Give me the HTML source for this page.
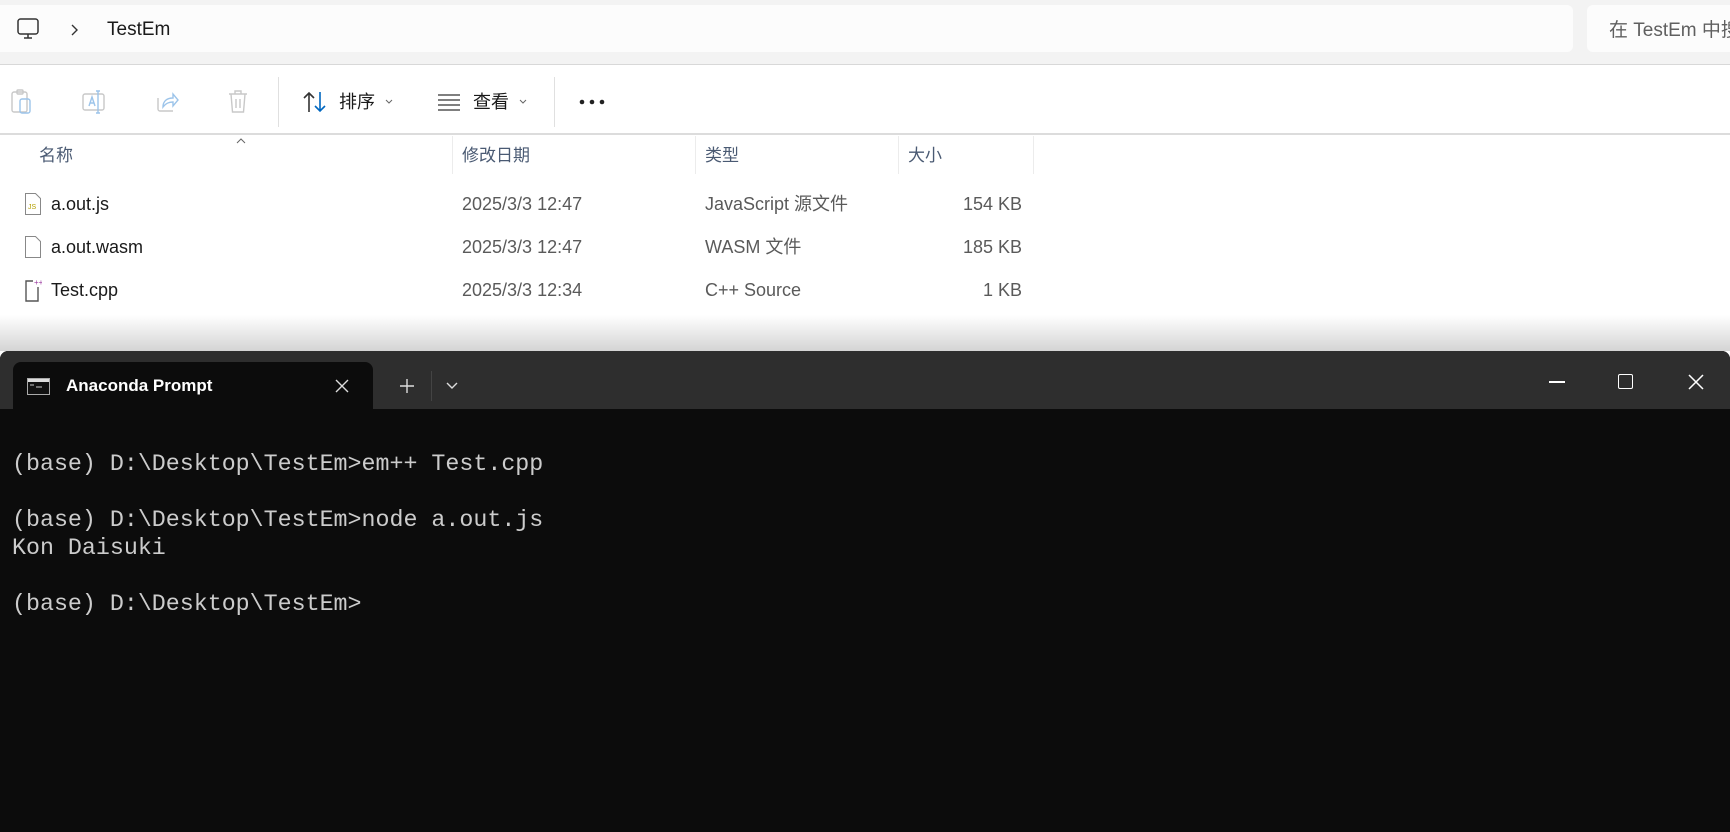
<!DOCTYPE html>
<html><head><meta charset="utf-8"><style>
*{margin:0;padding:0;box-sizing:border-box}
body{width:1730px;height:832px;overflow:hidden;background:#fff;font-family:"Segoe UI","Liberation Sans","Noto Sans CJK SC",sans-serif;position:relative}
.a{position:absolute}
.top{left:0;top:0;width:1730px;height:65px;background:#f3f3f3;border-bottom:1px solid #d8d8d8}
.addr{left:0;top:5px;width:1573px;height:47px;background:#fcfcfc;border-radius:0 6px 6px 0}
.search{left:1587px;top:5px;width:160px;height:47px;background:#fcfcfc;border-radius:6px}
.tb{left:0;top:66px;width:1730px;height:69px;background:#fff;border-bottom:2px solid #dcdcdc}
.t{font-size:18px;color:#1a1a1a;white-space:nowrap;line-height:22px}
.hd{font-size:17px;color:#4a5a73;top:146px;line-height:22px}
.sep{width:1px;background:#ececec;top:136px;height:38px}
.g{color:#5a5a5a}
.term{left:0;top:351px;width:1730px;height:481px;background:#0c0c0c;border-radius:8px 8px 0 0;overflow:hidden}
.tbar{left:0;top:0;width:1730px;height:58px;background:#2e2e2e}
.tab{left:13px;top:11px;width:360px;height:47px;background:#0c0c0c;border-radius:8px 8px 0 0}
pre{font-family:"Liberation Mono",monospace;font-size:23.3px;line-height:28px;color:#cccccc;position:absolute;left:12px;top:99px}
.shadow{left:0;top:315px;width:1730px;height:36px;background:linear-gradient(#fff,#d4d4d4)}
</style></head><body>
<div class="a top"></div>
<div class="a addr"></div>
<div class="a search"></div>
<svg class="a" style="left:16px;top:17px" width="24" height="24" viewBox="0 0 24 24" fill="none" stroke="#333" stroke-width="1.5"><rect x="2" y="2" width="20" height="15" rx="2.5"/><path d="M8 21h8M12 17v4"/></svg>
<svg class="a" style="left:69px;top:23px" width="10" height="14" viewBox="0 0 10 14" fill="none" stroke="#333" stroke-width="1.4"><path d="M3 2l5 5-5 5"/></svg>
<div class="a t" style="left:107px;top:19px;font-size:19px">TestEm</div>
<div class="a t" style="left:1609px;top:20px;font-size:19px;color:#5f5f5f">在 TestEm 中搜</div>
<div class="a tb"></div>
<svg class="a" style="left:10px;top:89px" width="24" height="26" viewBox="0 0 24 26" fill="none" stroke="#c8c8c8" stroke-width="1.4"><rect x="2" y="3" width="15" height="20" rx="2"/><rect x="7" y="1" width="6" height="4" rx="1"/><rect x="10" y="10" width="10" height="14" rx="2" stroke="#9cc4ea"/></svg>
<svg class="a" style="left:81px;top:89px" width="26" height="26" viewBox="0 0 26 26" fill="none" stroke="#c8c8c8" stroke-width="1.4"><rect x="2" y="5" width="21" height="16" rx="2"/><path d="M8 17l3-9 3 9M9 14h4" stroke="#9cc4ea"/><path d="M17 2v22M15 2h4M15 24h4" stroke="#9cc4ea"/></svg>
<svg class="a" style="left:154px;top:90px" width="26" height="24" viewBox="0 0 26 24" fill="none" stroke="#c8c8c8" stroke-width="1.4"><path d="M4 8v11a2 2 0 0 0 2 2h13"/><path d="M9 17c0-6 4-9 10-9V4l5 6-5 6v-4c-4 0-7 1-10 5z" stroke="#9cc4ea"/></svg>
<svg class="a" style="left:226px;top:89px" width="24" height="26" viewBox="0 0 24 26" fill="none" stroke="#c8c8c8" stroke-width="1.4"><path d="M3 5h18M9 5V2h6v3M5 5l1.5 18h11L19 5M10 10v9M14 10v9"/></svg>
<div class="a" style="left:278px;top:77px;width:1px;height:50px;background:#e0e0e0"></div>
<svg class="a" style="left:302px;top:90px" width="26" height="24" viewBox="0 0 26 24" fill="none" stroke-width="1.6"><path d="M7 22V3M2 8l5-5 5 5" stroke="#333"/><path d="M18 2v19M13 16l5 5 5-5" stroke="#0067c0"/></svg>
<div class="a t" style="left:339px;top:91px">排序</div>
<svg class="a" style="left:384px;top:98px" width="10" height="8" viewBox="0 0 10 8" fill="none" stroke="#666"><path d="M2 2l3 3 3-3"/></svg>
<svg class="a" style="left:437px;top:93px" width="24" height="18" viewBox="0 0 24 18" stroke="#333"><path d="M1 2h22M1 7h22M1 12h22M1 17h22" stroke-width="1.3"/></svg>
<div class="a t" style="left:473px;top:91px">查看</div>
<svg class="a" style="left:518px;top:98px" width="10" height="8" viewBox="0 0 10 8" fill="none" stroke="#666"><path d="M2 2l3 3 3-3"/></svg>
<div class="a" style="left:554px;top:77px;width:1px;height:50px;background:#e0e0e0"></div>
<svg class="a" style="left:578px;top:98px" width="28" height="8"><circle cx="4" cy="4" r="2.3" fill="#222"/><circle cx="14" cy="4" r="2.3" fill="#222"/><circle cx="24" cy="4" r="2.3" fill="#222"/></svg>
<svg class="a" style="left:235px;top:137px" width="12" height="8" viewBox="0 0 12 8" fill="none" stroke="#666"><path d="M2 6l4-4 4 4"/></svg>
<div class="a hd" style="left:39px;top:145px">名称</div>
<div class="a sep" style="left:452px"></div>
<div class="a hd" style="left:462px;top:145px">修改日期</div>
<div class="a sep" style="left:695px"></div>
<div class="a hd" style="left:705px;top:145px">类型</div>
<div class="a sep" style="left:898px"></div>
<div class="a hd" style="left:908px;top:145px">大小</div>
<div class="a sep" style="left:1033px"></div>
<svg class="a" style="left:24px;top:192px" width="18" height="24" viewBox="0 0 18 24" fill="#fff" stroke="#888"><path d="M1.5 1.5h10l5 5v16h-15z"/><text x="4" y="17" font-size="7" fill="#b5a000" stroke="none" font-family="Liberation Sans">JS</text></svg>
<div class="a t" style="left:51px;top:193px">a.out.js</div>
<div class="a t g" style="left:462px;top:193px">2025/3/3 12:47</div>
<div class="a t g" style="left:705px;top:193px">JavaScript 源文件</div>
<div class="a t g" style="left:900px;top:193px;width:122px;text-align:right">154 KB</div>
<svg class="a" style="left:24px;top:235px" width="18" height="24" viewBox="0 0 18 24" fill="#fff" stroke="#888"><path d="M1.5 1.5h10l5 5v16h-15z"/></svg>
<div class="a t" style="left:51px;top:236px">a.out.wasm</div>
<div class="a t g" style="left:462px;top:236px">2025/3/3 12:47</div>
<div class="a t g" style="left:705px;top:236px">WASM 文件</div>
<div class="a t g" style="left:900px;top:236px;width:122px;text-align:right">185 KB</div>
<svg class="a" style="left:24px;top:277px" width="18" height="26" viewBox="0 0 18 26" fill="none" stroke="#555" stroke-width="1.4"><path d="M9 4H2v20h12V10"/><text x="10" y="8" font-size="8" fill="#9b3ba0" stroke="none" font-family="Liberation Sans">++</text></svg>
<div class="a t" style="left:51px;top:279px">Test.cpp</div>
<div class="a t g" style="left:462px;top:279px">2025/3/3 12:34</div>
<div class="a t g" style="left:705px;top:279px">C++ Source</div>
<div class="a t g" style="left:900px;top:279px;width:122px;text-align:right">1 KB</div>
<div class="a shadow"></div>
<div class="a term">
<div class="a tbar"></div>
<div class="a tab"></div>
<svg class="a" style="left:27px;top:27px" width="23" height="17" viewBox="0 0 23 17"><rect x="0.5" y="0.5" width="22" height="16" fill="#111" stroke="#aaa"/><rect x="1" y="1" width="21" height="3" fill="#ddd"/><path d="M3 7h4M9 9h6" stroke="#ccc" stroke-width="1"/></svg>
<div class="a" style="left:66px;top:25px;font-size:17px;font-weight:bold;color:#fff;white-space:nowrap">Anaconda Prompt</div>
<svg class="a" style="left:334px;top:27px" width="16" height="16" stroke="#ddd" stroke-width="1.4"><path d="M2 2l12 12M14 2L2 14"/></svg>
<svg class="a" style="left:399px;top:27px" width="16" height="16" stroke="#ddd" stroke-width="1.4"><path d="M8 1v14M1 8h14"/></svg>
<div class="a" style="left:431px;top:20px;width:1px;height:30px;background:#444"></div>
<svg class="a" style="left:446px;top:31px" width="12" height="8" fill="none" stroke="#ddd" stroke-width="1.4"><path d="M1 1l5 5 5-5"/></svg>
<div class="a" style="left:1549px;top:30px;width:16px;height:1.5px;background:#fff"></div>
<div class="a" style="left:1618px;top:23px;width:15px;height:15px;border:1.5px solid #fff;border-radius:2px"></div>
<svg class="a" style="left:1688px;top:23px" width="16" height="16" stroke="#fff" stroke-width="1.5"><path d="M1 1l14 14M15 1L1 15"/></svg>
<div class="a" style="left:0;top:58px;width:1730px;height:423px;background:#0c0c0c"></div>
<pre>(base) D:\Desktop\TestEm>em++ Test.cpp

(base) D:\Desktop\TestEm>node a.out.js
Kon Daisuki

(base) D:\Desktop\TestEm></pre>
</div>
</body></html>
